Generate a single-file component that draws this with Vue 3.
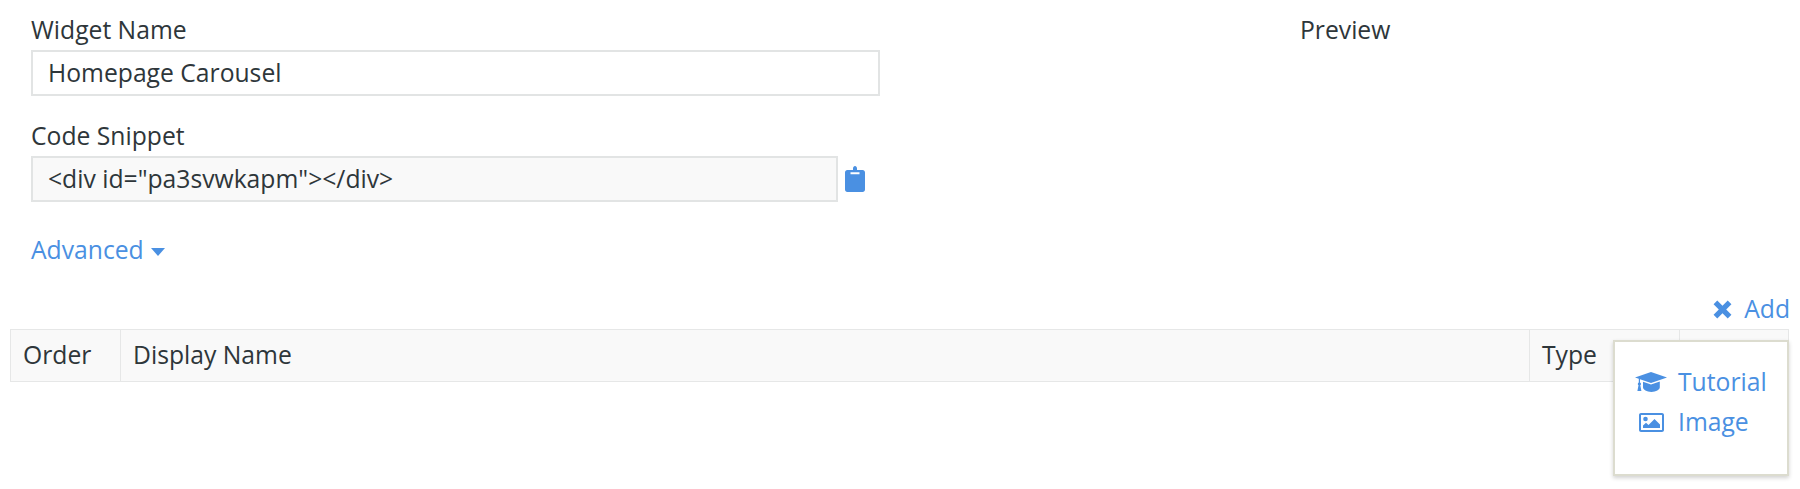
<template>
  <div class="page">
    <div class="top">
      <div class="form">
        <label class="label">Widget Name</label>
        <div class="field">Homepage Carousel</div>
        <label class="label snippet-label">Code Snippet</label>
        <div class="snippet-row">
          <div class="field readonly">&lt;div id="pa3svwkapm"&gt;&lt;/div&gt;</div>
          <svg class="clip" viewBox="0 0 20 26" aria-hidden="true">
            <path fill-rule="evenodd" d="M8 2.600C8 1.200 8.900 0 10 0s2 1.200 2 2.600V4h5.600C19 4 20 5 20 6.400V23.600C20 25 19 26 17.600 26H2.400C1 26 0 25 0 23.600V6.400C0 5 1 4 2.400 4H8ZM5.500 6.300V8.200H14.500V6.300Z" />
          </svg>
        </div>
        <a class="link advanced">Advanced<span class="caret"></span></a>
      </div>
      <div class="preview">Preview</div>
    </div>

    <div class="add-row">
      <a class="link add">
        <svg class="times" viewBox="0 0 20 20" aria-hidden="true">
          <path d="M4.500 .6 10 6.100 15.500 .6 19.400 4.500 13.900 10 19.400 15.500 15.500 19.400 10 13.900 4.500 19.400 .6 15.500 6.100 10 .6 4.500Z" />
        </svg>
        Add
      </a>
    </div>

    <div class="table-wrap">
      <div class="thead">
        <div v-for="col in columns" :key="col.key" class="th" :class="col.key">{{ col.title }}</div>
      </div>
      <div class="menu">
        <a class="menu-item">
          <span class="icon-box">
            <svg class="cap" viewBox="0 0 32 20" aria-hidden="true">
              <path d="M16 0 32 5.500 16 11 5 7.200V10.600C5.700 10.900 6 11.400 6 12 6 12.500 5.700 12.900 5.300 13.200L6.400 19H2.400L3.500 13.200C3.100 12.900 2.800 12.500 2.800 12 2.800 11.400 3.200 10.900 3.800 10.600V6.800L0 5.500Z" />
              <path d="M8 9.800 16 12.600 24.800 9.600V15.300C24.800 17.800 21 20 16.400 20S8 17.800 8 15.300Z" />
            </svg>
          </span>
          Tutorial
        </a>
        <a class="menu-item">
          <span class="icon-box">
            <svg class="pic" viewBox="0 0 25 19" aria-hidden="true">
              <path fill-rule="evenodd" d="M2 0H23C24.100 0 25 .9 25 2V17C25 18.100 24.100 19 23 19H2C.9 19 0 18.100 0 17V2C0 .9 .9 0 2 0ZM2.200 2 2 2.200V16.800L2.200 17H22.800L23 16.800V2.200L22.800 2Z" />
              <circle cx="6.500" cy="6" r="2.300" />
              <path d="M4 15V12.500L7 9.800 9.500 12 15.500 6 21 11.500V15Z" />
            </svg>
          </span>
          Image
        </a>
      </div>
    </div>
  </div>
</template>

<script setup>
const columns = [
  { key: 'order', title: 'Order' },
  { key: 'name', title: 'Display Name' },
  { key: 'type', title: 'Type' },
  { key: 'actions', title: '' }
];
</script>

<style>
html, body {
  background: #fff;
}
</style>

<style scoped>
.page {
  width: 1800px;
  height: 489px;
  overflow: hidden;
  box-sizing: border-box;
  padding: 14px 11px 0 10px;
  font-family: "Open Sans", sans-serif;
  font-size: 24.7px;
  line-height: 32px;
  color: #2e363a;
}

.top {
  display: flex;
  padding-left: 21px;
}

.form {
  width: 849px;
}

.label {
  display: block;
  height: 26px;
}

.snippet-label {
  margin-top: 24px;
}

.field {
  box-sizing: border-box;
  height: 46px;
  margin-top: 10px;
  padding: 5px 15px;
  border: 2px solid #e2e4e4;
  background: #fff;
}

.snippet-row {
  display: flex;
  align-items: center;
}

.readonly {
  width: 807px;
  background: #f9f9f9;
}

.clip {
  width: 20px;
  height: 26px;
  margin: 9px 0 0 7px;
  fill: #4a90e2;
}

.link {
  color: #4a90e2;
}

.advanced {
  display: block;
  margin-top: 32px;
}

.caret {
  display: inline-block;
  width: 0;
  height: 0;
  margin-left: 7px;
  border-style: solid;
  border-width: 8px 7.5px 0;
  border-color: #4a90e2 transparent transparent;
  vertical-align: 3px;
}

.preview {
  margin-left: 420px;
  height: 26px;
}

.add-row {
  display: flex;
  justify-content: flex-end;
  margin: 27px -1px 0 0;
}

.add {
  display: flex;
  align-items: center;
}

.times {
  width: 19px;
  height: 19px;
  margin-right: 12px;
  fill: #4a90e2;
}

.table-wrap {
  position: relative;
  margin-top: 4px;
}

.thead {
  display: flex;
  height: 53px;
  box-sizing: border-box;
  border: 1px solid #e6e7e7;
  background: #f9f9f9;
}

.th {
  box-sizing: border-box;
  padding: 9px 12px;
  border-left: 1px solid #e6e7e7;
}

.th:first-child {
  border-left: 0;
}

.order {
  width: 109px;
}

.name {
  width: 1409px;
}

.type {
  width: 150px;
}

.actions {
  flex: 1;
}

.menu {
  position: absolute;
  top: 11px;
  right: 0;
  box-sizing: border-box;
  width: 176px;
  height: 136px;
  padding: 20px 0 0 20px;
  background: #fff;
  border: 2px solid #dcdccf;
  box-shadow: 0 2px 4px rgba(0, 0, 0, 0.18);
}

.menu-item {
  display: flex;
  align-items: center;
  height: 40px;
  color: #4a90e2;
}

.icon-box {
  display: flex;
  justify-content: center;
  width: 32px;
  margin-right: 11px;
}

.cap {
  width: 32px;
  height: 20px;
  fill: #4a90e2;
}

.pic {
  width: 25px;
  height: 19px;
  fill: #4a90e2;
}
</style>
